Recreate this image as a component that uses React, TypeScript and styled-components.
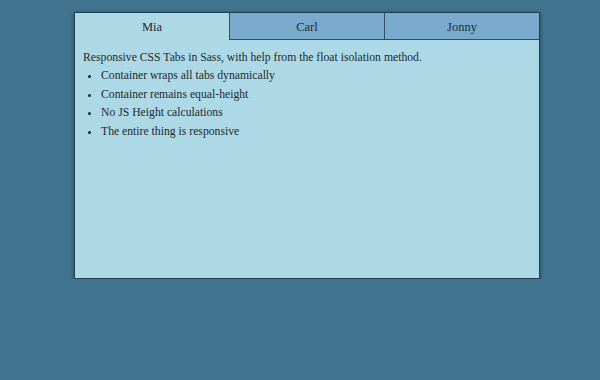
import React, { useState } from "react";
import styled, { createGlobalStyle } from "styled-components";

const serif = `"Liberation Serif", "Times New Roman", Times, "DejaVu Serif", serif`;

const Global = createGlobalStyle`
  html, body {
    margin: 0;
    padding: 0;
    background: #41748f;
  }
`;

const Page = styled.div`
  padding: 12px 0 0 74px;
  font-family: ${serif};
  font-size: 11.7px;
  color: #1f2a30;
`;

const Tabs = styled.div`
  width: 466px;
  height: 267px;
  box-sizing: border-box;
  border: 1px solid #263d4b;
  background: #add8e6;
  box-shadow: 0 1px 4px rgba(0, 0, 0, 0.45);
  display: flex;
  flex-direction: column;
`;

const TabBar = styled.div`
  display: flex;
`;

const Tab = styled.button<{ $active: boolean }>`
  flex: 1;
  height: 27px;
  padding: 3px 0 0;
  margin: 0;
  border: none;
  border-left: 1px solid ${(p) => (p.$active ? "transparent" : "#2f5064")};
  border-bottom: 1px solid ${(p) => (p.$active ? "transparent" : "#2f5064")};
  background: ${(p) => (p.$active ? "#add8e6" : "#79aacd")};
  font-family: ${serif};
  font-size: 12.5px;
  color: #1f2a30;
  cursor: pointer;
  &:first-child {
    border-left: none;
  }
`;

const Content = styled.div`
  padding: 10px 8px;
`;

const Intro = styled.p`
  margin: 0 0 1px;
  line-height: 16px;
`;

const List = styled.ul`
  margin: 0;
  padding-left: 18px;
`;

const Item = styled.li`
  line-height: 18.5px;
`;

const panels: Record<string, { intro: string; items: string[] }> = {
  Mia: {
    intro: "Responsive CSS Tabs in Sass, with help from the float isolation method.",
    items: [
      "Container wraps all tabs dynamically",
      "Container remains equal-height",
      "No JS Height calculations",
      "The entire thing is responsive",
    ],
  },
  Carl: { intro: "Carl's tab content.", items: [] },
  Jonny: { intro: "Jonny's tab content.", items: [] },
};

export default function App() {
  const [active, setActive] = useState("Mia");
  const panel = panels[active];
  return (
    <>
      <Global />
      <Page>
        <Tabs>
          <TabBar>
            {Object.keys(panels).map((name) => (
              <Tab key={name} $active={name === active} onClick={() => setActive(name)}>
                {name}
              </Tab>
            ))}
          </TabBar>
          <Content>
            <Intro>{panel.intro}</Intro>
            <List>
              {panel.items.map((t) => (
                <Item key={t}>{t}</Item>
              ))}
            </List>
          </Content>
        </Tabs>
      </Page>
    </>
  );
}
